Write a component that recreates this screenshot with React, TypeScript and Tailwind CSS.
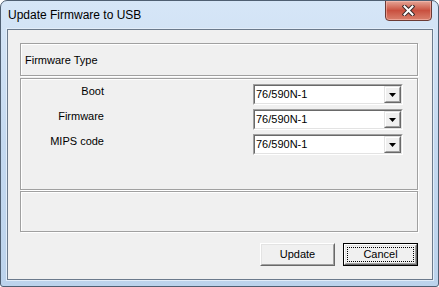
import React from "react";

function Combo({ value }: { value: string }) {
  return (
    <div className="w-[150px] h-[21px] border border-t-[#a0a0a0] border-l-[#a0a0a0] border-r-white border-b-white">
      <div className="w-full h-full border border-t-[#696969] border-l-[#696969] border-r-[#e3e3e3] border-b-[#e3e3e3] bg-white flex items-stretch">
        <div className="flex-1 pl-[1px] flex items-center text-[11px] leading-[13px] text-black">{value}</div>
        <div className="w-[17px] h-full border border-t-[#e3e3e3] border-l-[#e3e3e3] border-r-[#696969] border-b-[#696969]">
          <div className="w-full h-full border border-t-white border-l-white border-r-[#a0a0a0] border-b-[#a0a0a0] bg-[#f0f0f0] flex items-center justify-center">
            <svg width="7" height="4" viewBox="0 0 7 4" className="block">
              <path d="M0 0H7L3.5 4Z" fill="#000" />
            </svg>
          </div>
        </div>
      </div>
    </div>
  );
}

function Row({ label, value }: { label: string; value: string }) {
  return (
    <div className="flex items-start h-[21px]">
      <div className="w-[83px] pt-[1px] text-right text-[11px] leading-[13px] text-black">{label}</div>
      <div className="ml-[149px]">
        <Combo value={value} />
      </div>
    </div>
  );
}

function Button({ label, isDefault }: { label: string; isDefault?: boolean }) {
  if (isDefault) {
    return (
      <div className="w-[75px] h-[23px] border border-black">
        <div className="w-full h-full border border-t-white border-l-white border-r-[#696969] border-b-[#696969]">
          <div className="w-full h-full border border-t-[#e3e3e3] border-l-[#e3e3e3] border-r-[#a0a0a0] border-b-[#a0a0a0] bg-[#f0f0f0] p-[1px]">
            <div className="w-full h-full border border-dotted border-black flex items-center justify-center text-[11px] leading-[13px] text-black">
              {label}
            </div>
          </div>
        </div>
      </div>
    );
  }
  return (
    <div className="w-[75px] h-[23px] border border-t-white border-l-white border-r-[#696969] border-b-[#696969]">
      <div className="w-full h-full border border-t-[#e3e3e3] border-l-[#e3e3e3] border-r-[#a0a0a0] border-b-[#a0a0a0] bg-[#f0f0f0] flex items-center justify-center text-[11px] leading-[13px] text-black">
        {label}
      </div>
    </div>
  );
}

export default function App() {
  return (
    <div className="w-[439px] h-[287px] bg-white font-['Liberation_Sans',Arial,sans-serif]">
      <div className="w-[439px] h-[287px] rounded-t-[7px] rounded-b-[3px] border border-[#4f5f72] bg-gradient-to-b from-[#d6e6f7] via-[#c4d9f0] to-[#bcd3ec] flex flex-col overflow-hidden">
        <div className="h-[28px] flex items-start shrink-0">
          <div className="pl-[7px] pt-[7px] text-[12px] leading-[15px] text-black">Update Firmware to USB</div>
          <div className="ml-auto mr-[6px] -mt-[1px] w-[47px] h-[21px] rounded-b-[4px] border border-[#6b3a35] bg-gradient-to-b from-[#e4a597] via-[#c9503f] to-[#d9806d] flex items-center justify-center shadow-[inset_0_0_0_1px_rgba(255,200,190,0.5)]">
            <svg width="13" height="11" viewBox="0 0 13 11" className="block">
              <path d="M2.5 1.5L10.5 9.5M10.5 1.5L2.5 9.5" stroke="#3a2a2a" strokeWidth="4" strokeLinecap="square" />
              <path d="M2.5 1.5L10.5 9.5M10.5 1.5L2.5 9.5" stroke="#ffffff" strokeWidth="2" strokeLinecap="square" />
            </svg>
          </div>
        </div>
        <div className="ml-[6px] mr-[5px] h-[251px] border border-[#6b7a8c] bg-[#f0f0f0] flex flex-col pl-[12px] pr-[14px] pt-[13px] shrink-0 shadow-[0_0_0_1px_#e2edf9]">
          <div className="h-[33px] border border-[#a0a0a0] shadow-[inset_1px_1px_0_#fff,1px_1px_0_#fff] pl-[4px] pt-[10px] text-[11px] leading-[13px] text-black">
            Firmware Type
          </div>
          <div className="mt-[2px] h-[112px] border border-[#a0a0a0] shadow-[inset_1px_1px_0_#fff,1px_1px_0_#fff] pt-[5px] flex flex-col gap-[4px]">
            <Row label="Boot" value="76/590N-1" />
            <Row label="Firmware" value="76/590N-1" />
            <Row label="MIPS code" value="76/590N-1" />
          </div>
          <div className="mt-[1px] h-[41px] border border-[#a0a0a0] shadow-[inset_1px_1px_0_#fff,1px_1px_0_#fff]" />
          <div className="mt-[11px] flex justify-end gap-[8px]">
            <Button label="Update" />
            <Button label="Cancel" isDefault />
          </div>
        </div>
      </div>
    </div>
  );
}
